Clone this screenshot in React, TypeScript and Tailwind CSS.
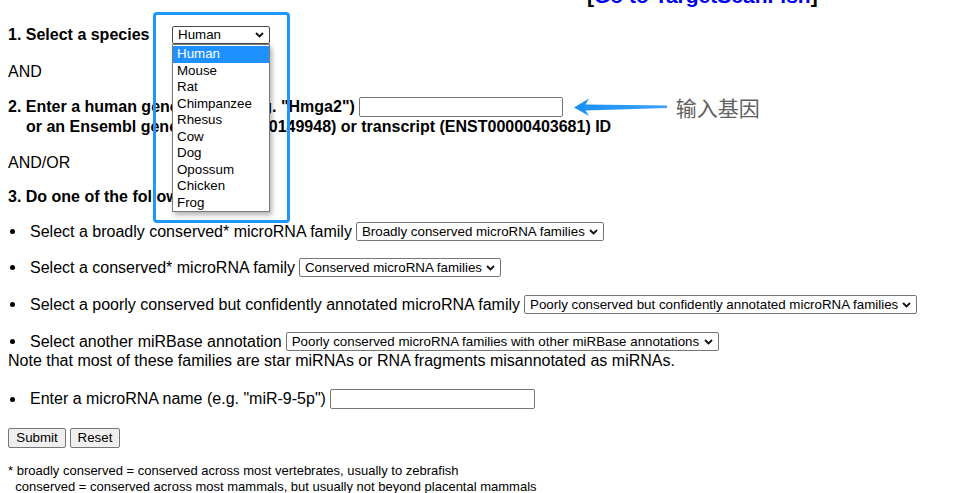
import React from "react";

const font = { fontFamily: '"Liberation Sans", Arial, sans-serif' };

const species = ["Human", "Mouse", "Rat", "Chimpanzee", "Rhesus", "Cow", "Dog", "Opossum", "Chicken", "Frog"];

function Chevron() {
  return (
    <svg width="9" height="6" viewBox="0 0 9 6" className="shrink-0">
      <path d="M1 1 L4.5 4.5 L8 1" fill="none" stroke="#111" strokeWidth="1.8" />
    </svg>
  );
}

// fake native select, width is fixed to match the page
function FakeSelect({ label, width }: { label: string; width: string }) {
  return (
    <div
      className={`${width} h-[19px] flex items-center justify-between pl-[5px] pr-[5px] border border-[#767676] rounded-[2px] bg-white text-[13.33px] leading-none text-black whitespace-nowrap overflow-hidden`}
    >
      <span>{label}</span>
      <Chevron />
    </div>
  );
}

function TextBox({ width }: { width: string }) {
  return <div className={`${width} h-[20px] border border-[#767676] rounded-[2px] bg-white`} />;
}

function Bullet({ children }: { children: React.ReactNode }) {
  return (
    <div className="flex items-center">
      <div className="w-[22px] flex items-center">
        <div className="ml-[2px] w-[5px] h-[5px] rounded-full bg-black" />
      </div>
      {children}
    </div>
  );
}

function Arrow() {
  return (
    <svg width="96" height="19" viewBox="0 0 96 19" className="shrink-0">
      <defs>
        <linearGradient id="ag" x1="0" x2="1" y1="0" y2="0">
          <stop offset="0" stopColor="#1a8ff5" />
          <stop offset="1" stopColor="#3aa2f8" />
        </linearGradient>
      </defs>
      <path d="M0 9.5 L15 0.5 L11.5 6.5 L93 7.5 L93 10 L11.5 12.5 L15 18 Z" fill="url(#ag)" />
    </svg>
  );
}

export default function App() {
  return (
    <div className="w-[964px] h-[493px] overflow-hidden bg-white text-black" style={font}>
      <div className="px-2 text-[16px] leading-[18px]">
        {/* top link, scrolled half out of view */}
        <div className="-mt-[16px] h-[24px] pl-[579px] font-bold text-[21px] leading-[24px] whitespace-nowrap">
          [<span className="text-[#0000ee]">Go to TargetScanFish</span>]
        </div>

        {/* 1. species */}
        <div className="mt-[18px] h-[18px] flex items-center">
          <span className="w-[164px] font-bold">1. Select a species</span>
          <div className="relative">
            <div className="w-[98px] h-[18px] flex items-center justify-between pl-[5px] pr-[5px] border border-[#4a4a4a] rounded-[2px] bg-white text-[13.33px] leading-none">
              <span>Human</span>
              <Chevron />
            </div>
            {/* opened dropdown */}
            <div className="absolute z-20 left-0 top-[18px] w-[98px] h-[168px] bg-white border border-[#7a7a7a] shadow-[2px_3px_5px_rgba(0,0,0,0.3)] py-px text-[13.33px]">
              {species.map((s, i) => (
                <div
                  key={s}
                  className={`h-[16.5px] leading-[16.5px] pl-[4px] ${i === 0 ? "bg-[#1e90ff] text-white" : "text-black"}`}
                >
                  {s}
                </div>
              ))}
            </div>
            {/* highlight box around it */}
            <div className="absolute z-30 -left-[19px] -top-[14px] w-[137px] h-[211px] border-[3px] border-[#1e96fa] rounded-[4px]" />
          </div>
        </div>

        <div className="mt-[19px] h-[18px]">AND</div>

        {/* 2. gene */}
        <div className="mt-[16px] h-[20px] flex items-center whitespace-nowrap">
          <span className="font-bold">2. Enter a human gene symbol (e.g. "Hmga2")</span>
          <div className="ml-[4px]">
            <TextBox width="w-[204px]" />
          </div>
          <div className="ml-[11px]">
            <Arrow />
          </div>
          <span
            className="ml-[6px] text-[21px] text-[#606060]"
            style={{ fontFamily: '"Noto Sans CJK SC", "Noto Sans", sans-serif' }}
          >
            输入基因
          </span>
        </div>
        <div className="mt-px h-[18px] pl-[18px] font-bold whitespace-nowrap">
          or an Ensembl gene (ENSG00000149948) or transcript (ENST00000403681) ID
        </div>

        <div className="mt-[18px] h-[18px]">AND/OR</div>

        <div className="mt-[16px] h-[18px] font-bold">3. Do one of the following:</div>

        {/* microRNA choices */}
        <div className="mt-[16px] h-[19px]">
          <Bullet>
            <span>Select a broadly conserved* microRNA family</span>
            <div className="ml-[4px]">
              <FakeSelect label="Broadly conserved microRNA families" width="w-[248px]" />
            </div>
          </Bullet>
        </div>
        <div className="mt-[17px] h-[19px]">
          <Bullet>
            <span>Select a conserved* microRNA family</span>
            <div className="ml-[4px]">
              <FakeSelect label="Conserved microRNA families" width="w-[202px]" />
            </div>
          </Bullet>
        </div>
        <div className="mt-[18px] h-[19px]">
          <Bullet>
            <span>Select a poorly conserved but confidently annotated microRNA family</span>
            <div className="ml-[4px]">
              <FakeSelect label="Poorly conserved but confidently annotated microRNA families" width="w-[393px]" />
            </div>
          </Bullet>
        </div>
        <div className="mt-[18px] h-[19px]">
          <Bullet>
            <span>Select another miRBase annotation</span>
            <div className="ml-[4px]">
              <FakeSelect label="Poorly conserved microRNA families with other miRBase annotations" width="w-[433px]" />
            </div>
          </Bullet>
        </div>
        <div className="mt-px h-[18px]">
          Note that most of these families are star miRNAs or RNA fragments misannotated as miRNAs.
        </div>
        <div className="mt-[19px] h-[20px]">
          <Bullet>
            <span>Enter a microRNA name (e.g. "miR-9-5p")</span>
            <div className="ml-[4px]">
              <TextBox width="w-[205px]" />
            </div>
          </Bullet>
        </div>

        {/* buttons */}
        <div className="mt-[19px] h-[20px] flex gap-[4px] text-[13.33px]">
          <button className="w-[58px] h-[20px] bg-[#efefef] border border-[#767676] rounded-[2px]">Submit</button>
          <button className="w-[50px] h-[20px] bg-[#efefef] border border-[#767676] rounded-[2px]">Reset</button>
        </div>

        {/* footnote */}
        <div className="mt-[15px] text-[13px] leading-[16px] whitespace-pre">
          <div>* broadly conserved = conserved across most vertebrates, usually to zebrafish</div>
          <div>{"  conserved = conserved across most mammals, but usually not beyond placental mammals"}</div>
        </div>
      </div>
    </div>
  );
}
